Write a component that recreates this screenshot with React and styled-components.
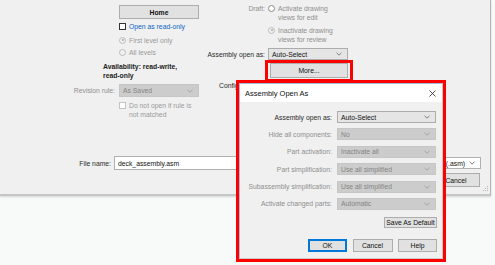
import React from "react";
import styled, { createGlobalStyle } from "styled-components";

const GlobalStyle = createGlobalStyle`
  html, body {
    margin: 0;
    padding: 0;
    background: #f8f9f9;
  }
  body {
    font-family: "Liberation Sans", Arial, sans-serif;
    font-size: 6.8px;
    color: #1b1b1b;
  }
  * {
    box-sizing: border-box;
  }
`;

const Screen = styled.div`
  position: relative;
  width: 495px;
  height: 265px;
  overflow: hidden;
  background: #f8f9f9;
`;

/* ===== Main (background) dialog ===== */
const MainWindow = styled.div`
  position: relative;
  width: 491px;
  height: 196px;
  background: #f0f0f0;
  border-right: 1px solid #b4b4b4;
  border-bottom: 2px solid #c6c6c6;
  box-shadow: 0 1px 2px rgba(0, 0, 0, 0.15);
  display: flex;
  flex-direction: column;
`;

const TopArea = styled.div`
  display: flex;
  align-items: flex-start;
`;

const Column = styled.div`
  width: ${(p) => p.$width}px;
  display: flex;
  flex-direction: column;
`;

const FieldRow = styled.div`
  display: grid;
  grid-template-columns: ${(p) => p.$label}px ${(p) => p.$control}px;
  column-gap: ${(p) => p.$gap ?? 4}px;
  align-items: ${(p) => (p.$top ? "start" : "center")};
  height: ${(p) => p.$h}px;
  margin-top: ${(p) => p.$mt}px;
  line-height: 9px;
`;

const Label = styled.span`
  text-align: right;
  white-space: nowrap;
  color: ${(p) => (p.$disabled ? "#8f8f8f" : "#2b2b2b")};
`;

/* label that disappears under the popup window */
const HiddenLabel = styled.span`
  grid-column: 1 / -1;
  margin-left: 19px;
  width: 17px;
  overflow: hidden;
  white-space: nowrap;
  color: #2b2b2b;
  line-height: 9px;
`;

const Control = styled.div`
  display: flex;
  align-items: ${(p) => (p.$top ? "flex-start" : "center")};
  gap: 3px;
`;

const Text = styled.span`
  white-space: nowrap;
  color: ${(p) => p.$color ?? "#333"};
`;

const TextBlock = styled.div`
  display: flex;
  flex-direction: column;
  line-height: 9px;
  color: ${(p) => p.$color ?? "#333"};
  font-weight: ${(p) => (p.$bold ? 700 : 400)};
  padding-left: ${(p) => p.$pl ?? 0}px;
  margin-top: ${(p) => p.$mt ?? 0}px;
  white-space: nowrap;
`;

const Button = styled.button`
  width: ${(p) => p.$w}px;
  height: ${(p) => p.$h}px;
  padding: 0;
  font-family: inherit;
  font-size: 6.8px;
  font-weight: ${(p) => (p.$bold ? 700 : 400)};
  color: #111;
  background: #e1e1e1;
  border: 1px solid ${(p) => (p.$primary ? "#0078d7" : "#adadad")};
  box-shadow: ${(p) => (p.$primary ? "inset 0 0 0 1px #0078d7" : "none")};
  margin-left: ${(p) => p.$ml ?? 0}px;
`;

const Combo = styled.div`
  width: ${(p) => p.$w}px;
  height: ${(p) => p.$h}px;
  display: flex;
  align-items: center;
  justify-content: space-between;
  padding: 0 5px 0 3px;
  background: ${(p) => (p.$disabled ? "#cccccc" : "#e5e5e5")};
  border: 1px solid ${(p) => (p.$disabled ? "#c6c6c6" : "#acacac")};
  color: ${(p) => (p.$disabled ? "#858585" : "#111")};
  white-space: nowrap;
  overflow: hidden;
`;

const Radio = styled.span`
  flex: none;
  position: relative;
  width: 7px;
  height: 7px;
  margin-top: ${(p) => p.$mt ?? 0}px;
  border-radius: 50%;
  border: 1px solid ${(p) => (p.$disabled ? "#bdbdbd" : "#8a8a8a")};
  background: ${(p) => (p.$disabled ? "#f0f0f0" : "#fff")};
  &::after {
    content: "";
    display: ${(p) => (p.$checked ? "block" : "none")};
    position: absolute;
    left: 1.5px;
    top: 1.5px;
    width: 2px;
    height: 2px;
    border-radius: 50%;
    background: #a8a8a8;
  }
`;

const Check = styled.span`
  flex: none;
  width: 7px;
  height: 7px;
  margin-top: ${(p) => p.$mt ?? 0}px;
  border: 1px solid ${(p) => (p.$disabled ? "#c4c4c4" : "#333")};
  background: #fff;
`;

const BottomArea = styled.div`
  margin-top: auto;
  padding-bottom: 7px;
  display: flex;
  flex-direction: column;
  gap: 3px;
`;

const FileRow = styled.div`
  display: flex;
  align-items: center;
  height: 14px;
  padding-right: 9px;
`;

const FileLabel = styled.span`
  width: 111px;
  text-align: right;
  color: #2b2b2b;
`;

const FileInput = styled.div`
  width: 291px;
  height: 14px;
  margin-left: 3px;
  padding: 0 3px;
  display: flex;
  align-items: center;
  background: #fff;
  border: 1px solid #b0b0b0;
  color: #111;
`;

const TypeCombo = styled(Combo)`
  margin-left: auto;
  background: #fff;
  border-color: #b0b0b0;
`;

const ButtonRow = styled.div`
  display: flex;
  justify-content: flex-end;
  padding-right: 10px;
`;

const Grip = styled.svg`
  position: absolute;
  right: 2px;
  bottom: 3px;
`;

/* ===== Annotation + popup (overlays) ===== */
const Highlight = styled.div`
  position: absolute;
  left: ${(p) => p.$x}px;
  top: ${(p) => p.$y}px;
  width: ${(p) => p.$w}px;
  height: ${(p) => p.$h}px;
  border: 3px solid #ff0000;
`;

const Popup = styled(Highlight)`
  background: #f0f0f0;
`;

const Dialog = styled.div`
  height: 100%;
  display: flex;
  flex-direction: column;
  border: 1px solid #a9bbd6;
  border-right-color: #c9c9c9;
  border-bottom-color: #c9c9c9;
`;

const TitleBar = styled.div`
  height: 18px;
  flex: none;
  display: flex;
  align-items: center;
  justify-content: space-between;
  padding: 0 6px 0 5px;
  background: #fff;
  font-size: 7.5px;
  color: #111;
`;

const Body = styled.div`
  flex: 1;
  display: flex;
  flex-direction: column;
  padding: 9px 5px 0 0;
  background: #f0f0f0;
`;

const FormGrid = styled.div`
  display: grid;
  grid-template-columns: 92px 99px;
  column-gap: 5px;
  row-gap: 5.4px;
  grid-auto-rows: 12px;
  align-items: center;
`;

const Actions = styled.div`
  display: flex;
  justify-content: flex-end;
  gap: ${(p) => p.$gap ?? 0}px;
  margin-top: ${(p) => p.$mt}px;
`;

function Chevron({ color = "#777" }) {
  return (
    <svg width="6" height="4" viewBox="0 0 6 4">
      <polyline points="0.5,0.8 3,3.2 5.5,0.8" fill="none" stroke={color} strokeWidth="0.8" />
    </svg>
  );
}

function Select({ value, w, h = 12, disabled }) {
  return (
    <Combo $w={w} $h={h} $disabled={disabled}>
      <span>{value}</span>
      <Chevron color={disabled ? "#9a9a9a" : "#666"} />
    </Combo>
  );
}

const popupRows = [
  { label: "Assembly open as:", value: "Auto-Select" },
  { label: "Hide all components:", value: "No", disabled: true },
  { label: "Part activation:", value: "Inactivate all", disabled: true },
  { label: "Part simplification:", value: "Use all simplified", disabled: true },
  { label: "Subassembly simplification:", value: "Use all simplified", disabled: true },
  { label: "Activate changed parts:", value: "Automatic", disabled: true },
];

export default function App() {
  return (
    <Screen>
      <GlobalStyle />
      <MainWindow>
        <TopArea>
          <Column $width={200}>
            <FieldRow $label={115} $control={80} $h={14} $mt={5}>
              <span />
              <Button $w={80} $h={14} $bold>Home</Button>
            </FieldRow>
            <FieldRow $label={115} $control={80} $h={9} $mt={3}>
              <span />
              <Control>
                <Check />
                <Text $color="#0a64c8">Open as read-only</Text>
              </Control>
            </FieldRow>
            <FieldRow $label={115} $control={80} $h={9} $mt={4.5}>
              <span />
              <Control>
                <Radio $disabled $checked />
                <Text $color="#9a9a9a">First level only</Text>
              </Control>
            </FieldRow>
            <FieldRow $label={115} $control={80} $h={9} $mt={3}>
              <span />
              <Control>
                <Radio $disabled />
                <Text $color="#9a9a9a">All levels</Text>
              </Control>
            </FieldRow>
            <TextBlock $bold $pl={103} $mt={5} $color="#222">
              <span>Availability: read-write,</span>
              <span>read-only</span>
            </TextBlock>
            <FieldRow $label={115} $control={80} $h={13} $mt={4.5}>
              <Label $disabled>Revision rule:</Label>
              <Select value="As Saved" w={80} h={13} disabled />
            </FieldRow>
            <FieldRow $label={115} $control={80} $h={18} $mt={3.5} $top>
              <span />
              <Control $top>
                <Check $disabled $mt={1.5} />
                <TextBlock $color="#9a9a9a">
                  <span>Do not open if rule is</span>
                  <span>not matched</span>
                </TextBlock>
              </Control>
            </FieldRow>
          </Column>

          <Column $width={160}>
            <FieldRow $label={65} $control={85} $gap={3} $h={18} $mt={3.5} $top>
              <Label $disabled>Draft:</Label>
              <Control $top>
                <Radio $mt={1} />
                <TextBlock $color="#8f8f8f">
                  <span>Activate drawing</span>
                  <span>views for edit</span>
                </TextBlock>
              </Control>
            </FieldRow>
            <FieldRow $label={65} $control={85} $gap={3} $h={18} $mt={4} $top>
              <span />
              <Control $top>
                <Radio $disabled $checked $mt={1} />
                <TextBlock $color="#8f8f8f">
                  <span>Inactivate drawing</span>
                  <span>views for review</span>
                </TextBlock>
              </Control>
            </FieldRow>
            <FieldRow $label={65} $control={85} $gap={3} $h={12} $mt={4.5}>
              <Label>Assembly open as:</Label>
              <Select value="Auto-Select" w={80} />
            </FieldRow>
            <FieldRow $label={65} $control={85} $gap={3} $h={15} $mt={3}>
              <span />
              <Button $w={78} $h={15} $ml={2}>More...</Button>
            </FieldRow>
            <FieldRow $label={65} $control={85} $gap={3} $h={9} $mt={2.5}>
              <HiddenLabel>Configuration:</HiddenLabel>
            </FieldRow>
          </Column>
        </TopArea>

        <BottomArea>
          <FileRow>
            <FileLabel>File name:</FileLabel>
            <FileInput>deck_assembly.asm</FileInput>
            <TypeCombo $w={72} $h={12}>
              <span>Creo Files (.asm)</span>
              <Chevron color="#555" />
            </TypeCombo>
          </FileRow>
          <ButtonRow>
            <Button $w={48} $h={14}>Cancel</Button>
          </ButtonRow>
        </BottomArea>

        <Grip width="5" height="5" viewBox="0 0 5 5">
          <rect x="4" y="0" width="1" height="1" fill="#b8b8b8" />
          <rect x="2" y="2" width="1" height="1" fill="#b8b8b8" />
          <rect x="4" y="2" width="1" height="1" fill="#b8b8b8" />
          <rect x="0" y="4" width="1" height="1" fill="#b8b8b8" />
          <rect x="2" y="4" width="1" height="1" fill="#b8b8b8" />
          <rect x="4" y="4" width="1" height="1" fill="#b8b8b8" />
        </Grip>
      </MainWindow>

      <Highlight $x={265} $y={60} $w={88} $h={22} />

      <Popup $x={236} $y={80} $w={210} $h={182}>
        <Dialog>
          <TitleBar>
            <span>Assembly Open As</span>
            <svg width="7" height="7" viewBox="0 0 7 7">
              <path d="M0.5 0.5 L6.5 6.5 M6.5 0.5 L0.5 6.5" stroke="#222" strokeWidth="0.8" />
            </svg>
          </TitleBar>
          <Body>
            <FormGrid>
              {popupRows.map((row) => (
                <React.Fragment key={row.label}>
                  <Label $disabled={row.disabled}>{row.label}</Label>
                  <Select value={row.value} w={99} disabled={row.disabled} />
                </React.Fragment>
              ))}
            </FormGrid>
            <Actions $mt={7}>
              <Button $w={53} $h={11}>Save As Default</Button>
            </Actions>
            <Actions $mt={11} $gap={5.5}>
              <Button $w={39} $h={13} $primary>OK</Button>
              <Button $w={40} $h={13}>Cancel</Button>
              <Button $w={39} $h={13}>Help</Button>
            </Actions>
          </Body>
        </Dialog>
      </Popup>
    </Screen>
  );
}
